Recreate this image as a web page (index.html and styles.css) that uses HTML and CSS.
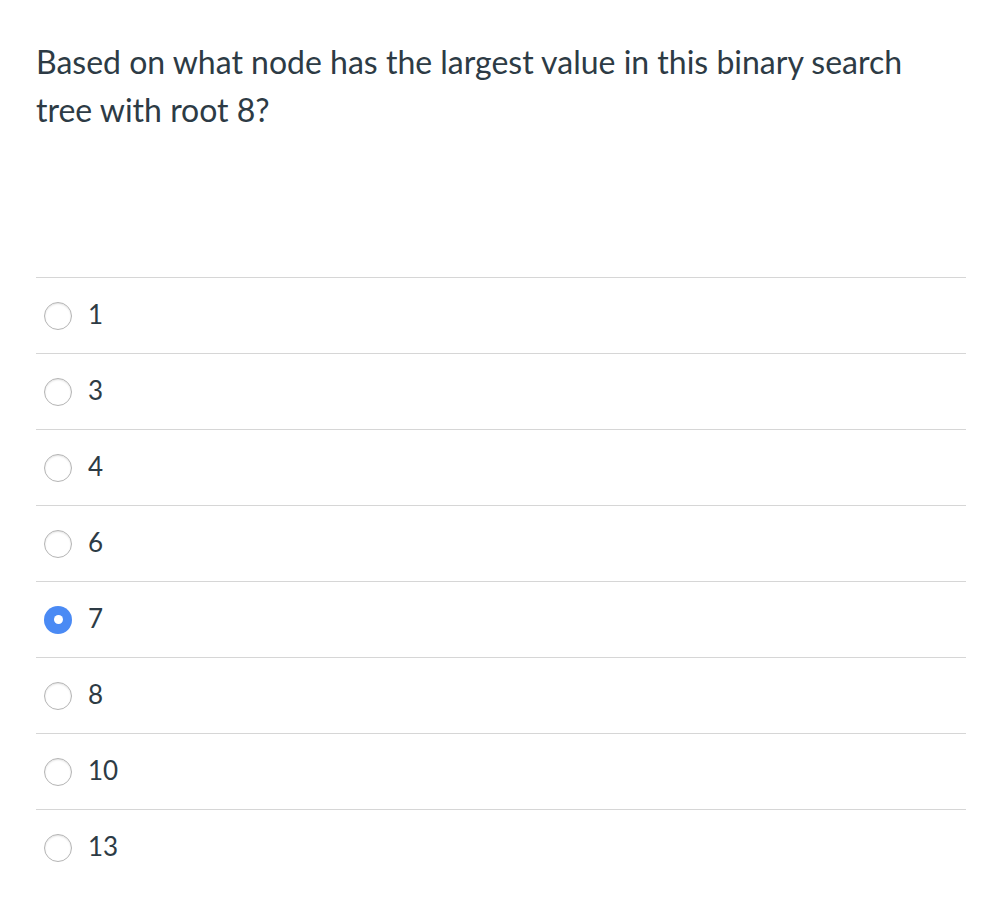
FILE: index.html
```html
<!DOCTYPE html>
<html>
<head>
<meta charset="utf-8">
<link rel="stylesheet" href="styles.css">
</head>
<body>
<div class="quiz">
  <div class="question">Based on what node has the largest value in this binary search tree with root 8?</div>
  <div class="answers">
    <label class="answer"><span class="radio"></span><span class="label">1</span></label>
    <label class="answer"><span class="radio"></span><span class="label">3</span></label>
    <label class="answer"><span class="radio"></span><span class="label">4</span></label>
    <label class="answer"><span class="radio"></span><span class="label">6</span></label>
    <label class="answer"><span class="radio checked"></span><span class="label">7</span></label>
    <label class="answer"><span class="radio"></span><span class="label">8</span></label>
    <label class="answer"><span class="radio"></span><span class="label">10</span></label>
    <label class="answer"><span class="radio"></span><span class="label">13</span></label>
  </div>
</div>
</body>
</html>
```

FILE: styles.css
```css
html, body {
  margin: 0;
  padding: 0;
  background: #ffffff;
}
body {
  font-family: Lato, "Liberation Sans", sans-serif;
  color: #2d3b45;
}
.quiz {
  width: 930px;
  padding: 38px 0 0 36px;
}
.question {
  font-size: 32px;
  line-height: 48px;
  width: 900px;
  min-height: 239px;
}
.answers {
  display: flex;
  flex-direction: column;
}
.answer {
  display: flex;
  align-items: center;
  height: 75px;
  border-top: 1px solid #d6d6d6;
  padding-left: 8px;
}
.radio {
  box-sizing: border-box;
  width: 28px;
  height: 28px;
  border-radius: 50%;
  border: 1px solid #b5b5b5;
  box-shadow: inset 0 1px 2px rgba(0,0,0,0.12);
  background: #fff;
  margin-right: 16px;
  display: flex;
  align-items: center;
  justify-content: center;
}
.radio.checked {
  border: none;
  box-shadow: none;
  background: #4a8af4;
}
.radio.checked::after {
  content: "";
  width: 9px;
  height: 9px;
  border-radius: 50%;
  background: #fff;
}
.label {
  font-size: 26px;
  line-height: 30px;
  padding-bottom: 3px;
}
```
